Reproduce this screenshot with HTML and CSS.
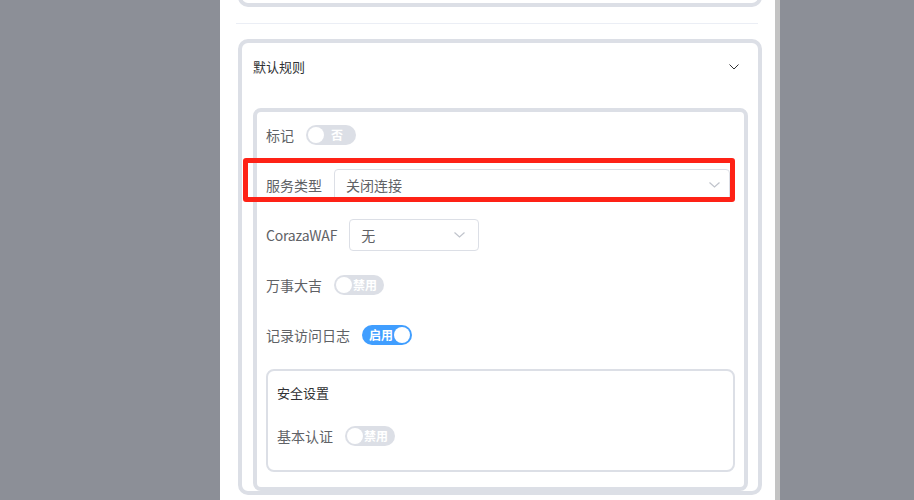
FILE: index.html
```html
<!DOCTYPE html>
<html lang="zh-CN">
<head>
    <meta charset="UTF-8">
    <meta name="viewport" content="width=device-width, initial-scale=1.0">
    <title>默认规则</title>
    <link rel="stylesheet" href="styles.css">
</head>
<body>
    <div class="panel">
        <div class="card card-prev"></div>
        <div class="divider"></div>

        <div class="card rule">
            <div class="rule-head">
                <span>默认规则</span>
                <svg class="head-arrow" width="10" height="6" viewBox="0 0 10 6"><polyline points="0.5,0.5 5,5 9.5,0.5" fill="none" stroke="#303133" stroke-width="1"/></svg>
            </div>

            <div class="rule-body">
                <div class="form-row">
                    <label>标记</label>
                    <span class="switch"><span class="knob"></span><span class="switch-text">否</span></span>
                </div>

                <div class="form-row marked">
                    <label>服务类型</label>
                    <div class="select select-wide">
                        <span>关闭连接</span>
                        <svg width="11" height="6" viewBox="0 0 11 6"><polyline points="0.5,0.5 5.5,5 10.5,0.5" fill="none" stroke="#c0c4cc" stroke-width="1.2"/></svg>
                    </div>
                    <span class="highlight"></span>
                </div>

                <div class="form-row">
                    <label class="latin">CorazaWAF</label>
                    <div class="select select-small">
                        <span>无</span>
                        <svg width="11" height="6" viewBox="0 0 11 6"><polyline points="0.5,0.5 5.5,5 10.5,0.5" fill="none" stroke="#c0c4cc" stroke-width="1.2"/></svg>
                    </div>
                </div>

                <div class="form-row">
                    <label>万事大吉</label>
                    <span class="switch"><span class="knob"></span><span class="switch-text">禁用</span></span>
                </div>

                <div class="form-row">
                    <label>记录访问日志</label>
                    <span class="switch on"><span class="switch-text">启用</span><span class="knob"></span></span>
                </div>

                <div class="group">
                    <div class="group-title">安全设置</div>
                    <div class="form-row last">
                        <label>基本认证</label>
                        <span class="switch"><span class="knob"></span><span class="switch-text">禁用</span></span>
                    </div>
                </div>
            </div>
        </div>
    </div>
</body>
</html>
```

FILE: styles.css
```css
body {
    margin: 0;
    height: 500px;
    overflow: hidden;
    background-color: #8c8f97;
    font-family: "Noto Sans CJK SC", "Noto Sans", sans-serif;
    color: #606266;
}

.panel {
    display: flex;
    flex-direction: column;
    box-sizing: border-box;
    width: 560px;
    min-height: 100vh;
    margin-left: 220px;
    padding: 0 13px 0 18px;
    background: #fff;
    border-right: 5px solid #c3c3c3;
}

.card {
    border: 4px solid #dcdfe6;
    border-radius: 10px;
    background: #fff;
}

.card-prev {
    height: 20px;
    margin-top: -21px;
    flex-shrink: 0;
}

.divider {
    height: 1px;
    flex-shrink: 0;
    margin: 16px 4px 15px -2px;
    background: #ebeef5;
}

.rule-head {
    display: flex;
    align-items: center;
    justify-content: space-between;
    box-sizing: border-box;
    height: 50px;
    padding: 0 19px 3px 11px;
    font-size: 13px;
    color: #303133;
}

.head-arrow {
    display: block;
}

.rule-body {
    margin: 15px 10px 0 11px;
    padding: 7px 9px 15px 9px;
    border: 4px solid #dcdfe6;
    border-radius: 8px;
}

.form-row {
    position: relative;
    display: flex;
    align-items: center;
    height: 32px;
    margin-bottom: 18px;
}

.form-row.last {
    margin-bottom: 0;
}

.form-row label {
    margin-right: 12px;
    font-size: 14px;
    color: #606266;
    white-space: nowrap;
}

.form-row label.latin {
    letter-spacing: -0.2px;
}

.select {
    display: flex;
    align-items: center;
    justify-content: space-between;
    box-sizing: border-box;
    height: 32px;
    padding: 0 12px 0 11px;
    border: 1px solid #dcdfe6;
    border-radius: 4px;
    font-size: 14px;
    color: #606266;
}

.select svg {
    display: block;
}

.select-wide {
    flex: 1;
    margin-right: 5px;
    padding-right: 9px;
}

.select-small {
    width: 130px;
    padding-right: 13px;
}

/* red annotation frame over the service type row */
.highlight {
    position: absolute;
    left: -23px;
    top: -11px;
    width: 492px;
    height: 44px;
    box-sizing: border-box;
    border: 5px solid #fe2216;
    border-radius: 3px;
}

.switch {
    display: inline-flex;
    align-items: center;
    box-sizing: border-box;
    width: 50px;
    height: 20px;
    padding: 0 2px;
    border-radius: 10px;
    background: #dcdfe6;
}

.switch.on {
    background: #409eff;
}

.knob {
    width: 16px;
    height: 16px;
    flex-shrink: 0;
    border-radius: 50%;
    background: #fff;
}

.switch-text {
    flex: 1;
    padding-right: 4px;
    font-size: 12px;
    font-weight: bold;
    line-height: 20px;
    color: #fff;
    text-align: center;
}

.switch.on .switch-text {
    padding: 0 0 0 4px;
}

.group {
    margin-top: 2px;
    padding: 12px 9px 18px 9px;
    border: 2px solid #dcdfe6;
    border-radius: 8px;
}

.group-title {
    margin-bottom: 17px;
    font-size: 13px;
    line-height: 20px;
    color: #303133;
}
```
